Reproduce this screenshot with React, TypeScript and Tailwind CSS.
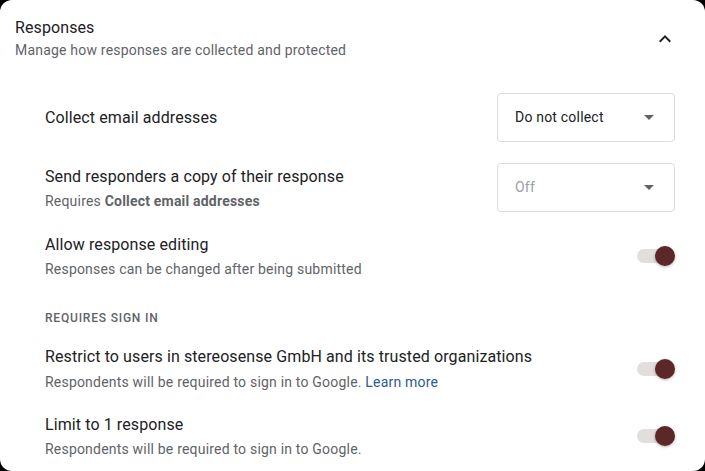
import React from "react";

function Dropdown({ value, muted }: { value: string; muted?: boolean }) {
  return (
    <div className="flex h-[49px] w-[178px] shrink-0 items-center justify-between rounded-[4px] border border-[#dadce0] pl-[17px] pr-[20px]">
      <span
        className={
          muted
            ? "text-[14px] tracking-[0.2px] text-[#9aa0a6]"
            : "text-[14px] tracking-[0.2px] text-[#202124]"
        }
      >
        {value}
      </span>
      <svg width="10" height="5" viewBox="0 0 10 5">
        <path d="M0 0 L10 0 L5 5 Z" fill="#5f6368" />
      </svg>
    </div>
  );
}

function Toggle() {
  return (
    <div className="relative h-[20px] w-[38px] shrink-0">
      <div className="absolute left-0 top-[3px] h-[14px] w-[34px] rounded-full bg-[#e3dede]" />
      <div className="absolute right-0 top-0 h-[20px] w-[20px] rounded-full bg-[#5b2727] shadow-[0_1px_3px_rgba(0,0,0,0.3)]" />
    </div>
  );
}

function Row({
  title,
  sub,
  right,
  className = "",
  subGap = "mt-[2px]",
}: {
  title: string;
  sub?: React.ReactNode;
  right: React.ReactNode;
  className?: string;
  subGap?: string;
}) {
  return (
    <div
      className={`flex items-center justify-between pl-[45px] pr-[30px] ${className}`}
    >
      <div className="flex flex-col">
        <div className="text-[16px] leading-[24px] tracking-[0.1px] text-[#202124]">
          {title}
        </div>
        {sub && (
          <div
            className={`${subGap} text-[14px] leading-[20px] tracking-[0.2px] text-[#5f6368]`}
          >
            {sub}
          </div>
        )}
      </div>
      {right}
    </div>
  );
}

export default function App() {
  return (
    <div
      className="h-[471px] w-[705px] bg-black"
      style={{ fontFamily: "Roboto, 'Noto Sans', sans-serif" }}
    >
      <div className="flex h-full flex-col rounded-[12px] bg-white">
        <div className="flex items-center justify-between pl-[15px] pr-[28px] pt-[17px]">
          <div>
            <div className="text-[16px] leading-[22px] tracking-[0.1px] text-[#202124]">
              Responses
            </div>
            <div className="mt-[1px] text-[14px] leading-[20px] tracking-[0.2px] text-[#5f6368]">
              Manage how responses are collected and protected
            </div>
          </div>
          <svg width="24" height="24" viewBox="0 0 24 24">
            <path
              d="M7.4 15.4 L12 10.8 L16.6 15.4 L18 14 L12 8 L6 14 Z"
              fill="#202124"
            />
          </svg>
        </div>

        <Row
          className="mt-[33px]"
          title="Collect email addresses"
          right={<Dropdown value="Do not collect" />}
        />
        <Row
          className="mt-[21px]"
          title="Send responders a copy of their response"
          sub={
            <>
              Requires <span className="font-bold">Collect email addresses</span>
            </>
          }
          right={<Dropdown value="Off" muted />}
        />
        <Row
          className="mt-[21px]"
          title="Allow response editing"
          sub="Responses can be changed after being submitted"
          right={<Toggle />}
        />

        <div className="mt-[31px] pl-[45px] text-[12px] font-medium uppercase leading-[16px] tracking-[0.8px] text-[#5f6368]">
          Requires sign in
        </div>

        <Row
          className="mt-[19px]"
          subGap="mt-[3px]"
          title="Restrict to users in stereosense GmbH and its trusted organizations"
          sub={
            <>
              Respondents will be required to sign in to Google.{" "}
              <span className="text-[#2b5c92]">Learn more</span>
            </>
          }
          right={<Toggle />}
        />
        <Row
          className="mt-[21px]"
          title="Limit to 1 response"
          sub="Respondents will be required to sign in to Google."
          right={<Toggle />}
        />
      </div>
    </div>
  );
}
